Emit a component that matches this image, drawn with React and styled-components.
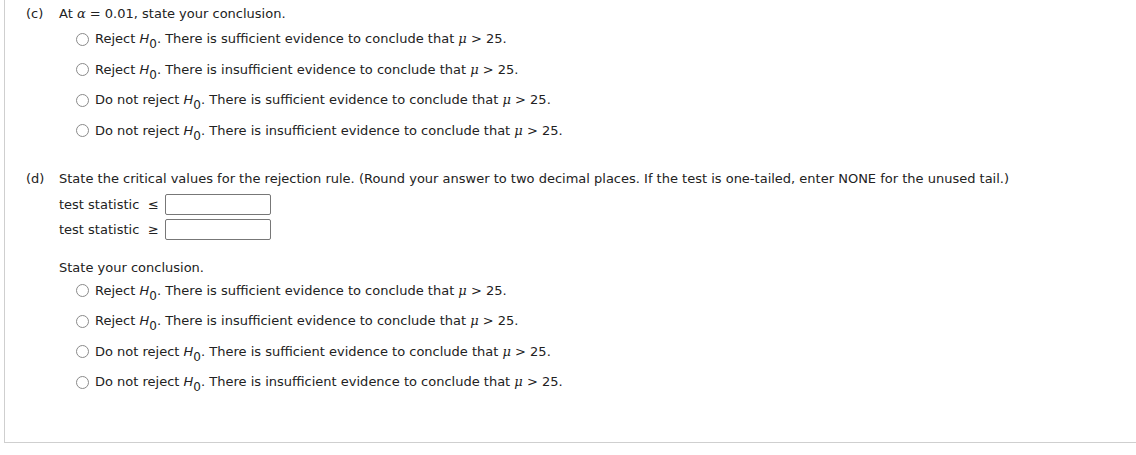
import React from 'react';
import styled, { createGlobalStyle } from 'styled-components';

const GlobalStyle = createGlobalStyle`
  html, body {
    margin: 0;
    padding: 0;
    background: #fff;
  }
  body {
    font-family: Verdana, "DejaVu Sans", sans-serif;
    font-size: 13px;
    color: #222;
  }
`;

const Panel = styled.div`
  margin-left: 4px;
  height: 443px;
  box-sizing: border-box;
  border-left: 1px solid #cfcfcf;
  border-bottom: 1px solid #cfcfcf;
  padding: 6px 0 0 21px;
`;

const Part = styled.div`
  display: flex;
  margin-bottom: ${p => p.gap || 0}px;
`;

const PartLabel = styled.div`
  width: 33px;
  flex: none;
  line-height: 16px;
`;

const PartBody = styled.div`
  flex: 1;
`;

const Prompt = styled.div`
  line-height: 16px;
`;

const Options = styled.div`
  display: flex;
  flex-direction: column;
  gap: 14.5px;
  margin: ${p => p.top || 9}px 0 0 17px;
`;

const Option = styled.label`
  display: flex;
  align-items: center;
  gap: 6px;
  line-height: 16px;
`;

const Radio = styled.span`
  width: 13px;
  height: 13px;
  box-sizing: border-box;
  border: 1px solid #8a8a8a;
  border-radius: 50%;
  flex: none;
  background: #fff;
`;

const Var = styled.i`
  font-family: "DejaVu Serif", "Liberation Serif", serif;
  font-style: italic;
`;

const H = styled.i`
  font-style: italic;
`;

const Sub = styled.sub`
  font-size: 12px;
  line-height: 0;
  vertical-align: -5px;
`;

const FieldRow = styled.div`
  display: flex;
  align-items: center;
  gap: 6px;
  height: 21px;
  margin-top: ${p => p.top}px;
`;

const FieldLabel = styled.span`
  width: 100px;
  display: flex;
  justify-content: space-between;
`;

const Input = styled.input`
  width: 106px;
  height: 21px;
  box-sizing: border-box;
  border: 1px solid #777;
  border-radius: 2px;
  padding: 0 3px;
  font: inherit;
`;

const SubPrompt = styled.div`
  line-height: 16px;
  margin-top: 20px;
`;

const H0 = () => (
  <>
    <H>H</H>
    <Sub>0</Sub>
  </>
);

const Mu = () => <Var>μ</Var>;

const conclusions = [
  ['Reject', 'sufficient'],
  ['Reject', 'insufficient'],
  ['Do not reject', 'sufficient'],
  ['Do not reject', 'insufficient'],
];

const ConclusionList = ({ top }) => (
  <Options top={top}>
    {conclusions.map(([verb, kind]) => (
      <Option key={verb + kind}>
        <Radio />
        <span>
          {verb} <H0 />. There is {kind} evidence to conclude that <Mu /> &gt; 25.
        </span>
      </Option>
    ))}
  </Options>
);

export default function App() {
  return (
    <>
      <GlobalStyle />
      <Panel>
        <Part gap={32}>
          <PartLabel>(c)</PartLabel>
          <PartBody>
            <Prompt>
              At <Var>α</Var> = 0.01, state your conclusion.
            </Prompt>
            <ConclusionList top={9} />
          </PartBody>
        </Part>
        <Part>
          <PartLabel>(d)</PartLabel>
          <PartBody>
            <Prompt>
              State the critical values for the rejection rule. (Round your answer to two decimal places. If the test is one-tailed, enter NONE for the unused tail.)
            </Prompt>
            <FieldRow top={7}>
              <FieldLabel>test statistic <span>≤</span></FieldLabel>
              <Input type="text" />
            </FieldRow>
            <FieldRow top={4}>
              <FieldLabel>test statistic <span>≥</span></FieldLabel>
              <Input type="text" />
            </FieldRow>
            <SubPrompt>State your conclusion.</SubPrompt>
            <ConclusionList top={7} />
          </PartBody>
        </Part>
      </Panel>
    </>
  );
}
